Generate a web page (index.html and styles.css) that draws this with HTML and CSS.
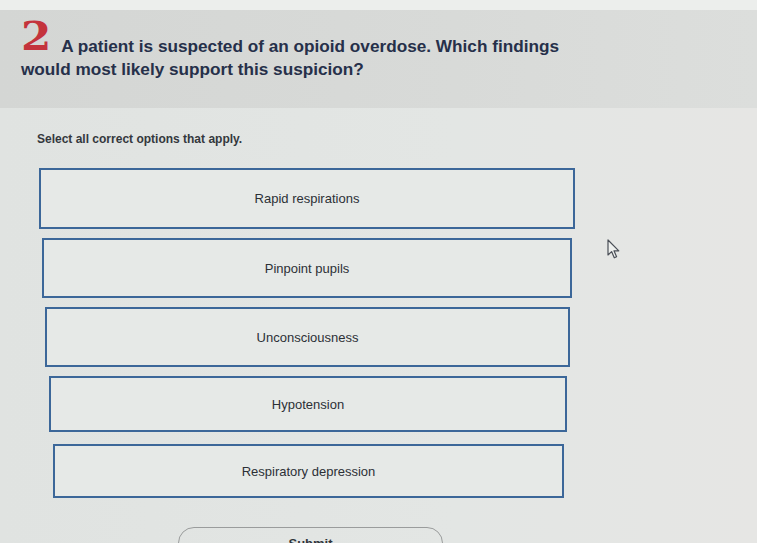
FILE: index.html
```html
<!DOCTYPE html>
<html>
<head>
<meta charset="utf-8">
<link rel="stylesheet" href="styles.css">
</head>
<body>
<div class="strip"></div>
<header class="band">
  <p class="question"><span class="num">2</span>A patient is suspected of an opioid overdose. Which findings<br>would most likely support this suspicion?</p>
</header>
<main class="content">
  <p class="hint">Select all correct options that apply.</p>
  <ul class="options">
    <li class="option">Rapid respirations</li>
    <li class="option">Pinpoint pupils</li>
    <li class="option">Unconsciousness</li>
    <li class="option">Hypotension</li>
    <li class="option">Respiratory depression</li>
  </ul>
  <button class="submit">Submit</button>
</main>
<svg class="cursor" width="14" height="21" viewBox="0 0 14 21"><path d="M1 1 L1 16 L4.6 12.6 L7.3 18.8 L9.6 17.8 L7 11.8 L11.8 11.8 Z" fill="#eef0ee" stroke="#4a4f57" stroke-width="1.2" stroke-linejoin="round"/></svg>
</body>
</html>
```
FILE: styles.css
```css
html, body {
  margin: 0;
  padding: 0;
}
body {
  width: 757px;
  height: 543px;
  overflow: hidden;
  position: relative;
  background: linear-gradient(90deg, #e0e3e1 0%, #e3e6e4 60%, #e6e6e4 100%);
  font-family: "Liberation Sans", Arial, sans-serif;
}
.strip {
  height: 10px;
  background: #eceeec;
}
.band {
  height: 98px;
  box-sizing: border-box;
  padding: 25px 0 0 21px;
  background: linear-gradient(90deg, #d4d6d4 0%, #d8dad8 60%, #dcdedc 100%);
}
.question {
  margin: 0;
  font-size: 17.2px;
  line-height: 23px;
  font-weight: bold;
  color: #26304a;
}
.num {
  display: inline-block;
  font-family: "DejaVu Serif", serif;
  font-weight: bold;
  font-size: 39px;
  line-height: 0;
  color: #c4333c;
  margin-right: 13px;
  vertical-align: 2px;
  transform: scaleX(1.12);
  transform-origin: left center;
}
.content {
  padding-top: 24px;
}
.hint {
  margin: 0 0 22px 37px;
  font-size: 12px;
  line-height: 14px;
  font-weight: bold;
  color: #34383d;
}
.options {
  list-style: none;
  margin: 0;
  padding: 0;
  display: flex;
  flex-direction: column;
  gap: 9px;
}
.option {
  box-sizing: border-box;
  display: flex;
  align-items: center;
  justify-content: center;
  border: 2px solid #3c6799;
  background: #e6e9e7;
  font-size: 13px;
  color: #2c3036;
}
.option:nth-child(1) { margin-left: 39px; width: 536px; height: 61px; }
.option:nth-child(2) { margin-left: 42px; width: 530px; height: 60px; }
.option:nth-child(3) { margin-left: 45px; width: 525px; height: 60px; }
.option:nth-child(4) { margin-left: 49px; width: 518px; height: 56px; }
.option:nth-child(5) { margin-left: 53px; width: 511px; height: 54px; margin-top: 3px; }
.submit {
  display: block;
  margin: 29px 0 0 178px;
  width: 265px;
  height: 36px;
  box-sizing: border-box;
  border: 1px solid #9a9c9c;
  border-radius: 16px;
  background: transparent;
  font-family: "Liberation Sans", Arial, sans-serif;
  font-size: 13px;
  font-weight: bold;
  color: #30343a;
  padding: 0;
  padding-bottom: 4px;
}
.cursor {
  position: absolute;
  left: 607px;
  top: 239px;
}
```
